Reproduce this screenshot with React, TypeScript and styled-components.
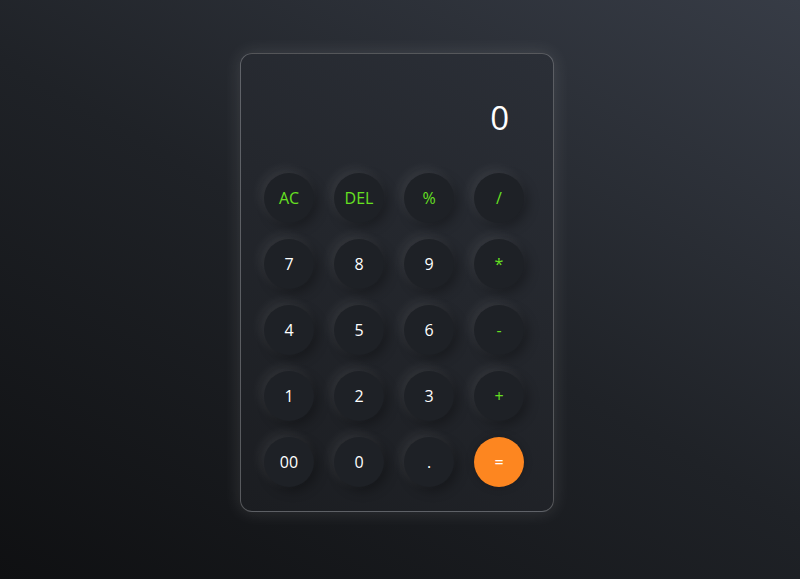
import React from "react";
import styled, { createGlobalStyle } from "styled-components";

const Global = createGlobalStyle`
  html, body { margin: 0; padding: 0; height: 100%; }
  body {
    font-family: "Open Sans", "Noto Sans", sans-serif;
    background: linear-gradient(30deg, #0f1012 0%, #1f2227 50%, #373c46 100%);
    min-height: 579px;
  }
  #root { min-height: 579px; }
`;

const Page = styled.div`
  min-height: 579px;
  display: flex;
  justify-content: center;
  padding: 53px 6px 0 0;
  box-sizing: border-box;
`;

const Card = styled.div`
  width: 314px;
  height: 459px;
  box-sizing: border-box;
  border: 1px solid rgba(255, 255, 255, 0.25);
  border-radius: 12px;
  background: linear-gradient(30deg, #1b1d21 0%, #24272d 55%, #2b2f37 100%);
  box-shadow: 0 0 18px rgba(255, 255, 255, 0.12);
  padding: 0 29px 0 23px;
  display: flex;
  flex-direction: column;
`;

const Display = styled.div`
  height: 119px;
  display: flex;
  align-items: flex-end;
  justify-content: flex-end;
  padding: 0 15px 39px 0;
  color: #ffffff;
  font-size: 33px;
  line-height: 1;
  box-sizing: border-box;
`;

const Grid = styled.div`
  display: grid;
  grid-template-columns: repeat(4, 50px);
  column-gap: 20px;
  row-gap: 16px;
`;

const Key = styled.button<{ $tone: "num" | "op" | "eq" }>`
  width: 50px;
  height: 50px;
  border-radius: 50%;
  border: none;
  padding: 0;
  font-family: "Open Sans", "Noto Sans", sans-serif;
  font-size: 16px;
  font-weight: 500;
  cursor: pointer;
  display: flex;
  align-items: center;
  justify-content: center;
  color: ${(p) => (p.$tone === "op" ? "#66e022" : "#ffffff")};
  background: ${(p) => (p.$tone === "eq" ? "#fd8620" : "#1e2126")};
  box-shadow: ${(p) =>
    p.$tone === "eq"
      ? "0 0 10px rgba(0,0,0,0.2)"
      : "-4px -4px 12px rgba(255,255,255,0.08), 4px 4px 12px rgba(0,0,0,0.3)"};
`;

type K = { label: string; tone: "num" | "op" | "eq" };

const keys: K[] = [
  { label: "AC", tone: "op" },
  { label: "DEL", tone: "op" },
  { label: "%", tone: "op" },
  { label: "/", tone: "op" },
  { label: "7", tone: "num" },
  { label: "8", tone: "num" },
  { label: "9", tone: "num" },
  { label: "*", tone: "op" },
  { label: "4", tone: "num" },
  { label: "5", tone: "num" },
  { label: "6", tone: "num" },
  { label: "-", tone: "op" },
  { label: "1", tone: "num" },
  { label: "2", tone: "num" },
  { label: "3", tone: "num" },
  { label: "+", tone: "op" },
  { label: "00", tone: "num" },
  { label: "0", tone: "num" },
  { label: ".", tone: "num" },
  { label: "=", tone: "eq" },
];

export default function App() {
  return (
    <>
      <Global />
      <Page>
        <Card>
          <Display>0</Display>
          <Grid>
            {keys.map((k) => (
              <Key key={k.label} $tone={k.tone}>
                {k.label}
              </Key>
            ))}
          </Grid>
        </Card>
      </Page>
    </>
  );
}
